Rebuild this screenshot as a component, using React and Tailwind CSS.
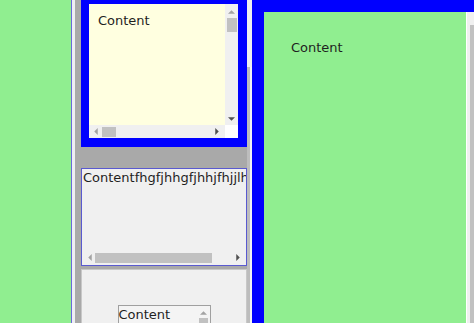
import React from 'react';

const Arrow = ({ dir, dark }) => {
  const pts = {
    up: '0,4 4,0 8,4',
    down: '0,0 8,0 4,4',
    left: '4,0 4,8 0,4',
    right: '0,0 0,8 4,4',
  }[dir];
  const box = dir === 'up' || dir === 'down' ? '0 0 8 4' : '0 0 4 8';
  const size = dir === 'up' || dir === 'down' ? 'w-[7px] h-[4px]' : 'w-[4px] h-[7px]';
  return (
    <svg viewBox={box} className={size}>
      <polygon points={pts} fill={dark ? '#505050' : '#a3a3a3'} />
    </svg>
  );
};

const App = () => {
  return (
    <div className="flex h-[323px] w-[474px] overflow-hidden bg-[#90ee90] font-['DejaVu_Sans',sans-serif] text-[13px] leading-[16px] text-[#1f1f1f]">
      {/* left green space */}
      <div className="w-[71px] shrink-0" />

      {/* middle column */}
      <div className="flex w-[181px] shrink-0 border-l border-[#6a6ad8] bg-[#eeeef4]">
        <div className="ml-[3px] flex w-[172px] flex-col bg-[#a9a9a9] pl-[6px]">
          {/* top box */}
          <div className="flex h-[147px] w-[166px] shrink-0 flex-col border-l-[8px] border-r-[9px] border-t-[4px] border-b-[9px] border-[#0000ff] bg-[#ffffe0]">
            <div className="flex flex-1">
              <div className="flex-1 px-[9px] pt-[9px]">Content</div>
              <div className="flex w-[13px] flex-col items-center bg-[#f0f0f0] pt-[6px] pb-[4px]">
                <Arrow dir="up" />
                <div className="mt-[4px] h-[14px] w-[10px] bg-[#c1c1c1]" />
                <div className="flex-1" />
                <Arrow dir="down" dark />
              </div>
            </div>
            <div className="flex h-[13px]">
              <div className="flex flex-1 items-center bg-[#f0f0f0] pl-[5px] pr-[6px]">
                <Arrow dir="left" />
                <div className="ml-[4px] h-[10px] w-[14px] bg-[#c1c1c1]" />
                <div className="flex-1" />
                <Arrow dir="right" dark />
              </div>
              <div className="w-[13px] bg-white" />
            </div>
          </div>

          {/* second box */}
          <div className="mt-[21px] flex h-[98px] w-[166px] shrink-0 flex-col overflow-hidden border border-[#5a5ad0] bg-[#f0f0f0]">
            <div className="flex-1 whitespace-nowrap pl-[1px] pt-[1px]">Contentfhgfjhhgfjhhjfhjjlhgfj</div>
            <div className="mb-[2px] flex h-[11px] items-center px-[6px]">
              <Arrow dir="left" />
              <div className="ml-[3px] h-[10px] w-[117px] bg-[#c1c1c1]" />
              <div className="flex-1" />
              <Arrow dir="right" dark />
            </div>
          </div>

          {/* third box */}
          <div className="mt-[3px] flex w-[166px] flex-1 flex-col items-center border border-b-0 border-[#c8c8c8] bg-[#f0f0f0] pt-[35px]">
            <div className="flex w-[93px] flex-1 border border-b-0 border-[#a0a0a0] bg-[#f4f4f4]">
              <div className="flex-1 pt-[1px]">Content</div>
              <div className="flex w-[12px] flex-col items-center pt-[5px]">
                <Arrow dir="up" />
                <div className="mt-[3px] w-[9px] flex-1 bg-[#c1c1c1]" />
              </div>
            </div>
          </div>
        </div>

        {/* middle scroll strip */}
        <div className="flex w-[5px] flex-col">
          <div className="h-[67px] bg-[#f0f0f0]" />
          <div className="flex-1 border-r-2 border-[#f4f4f4] bg-[#bdbdbd]" />
        </div>
      </div>

      {/* right panel */}
      <div className="flex flex-1 border-l-[12px] border-t-[12px] border-[#0000ff]">
        <div className="flex-1 px-[27px] pt-[28px]">Content</div>
        <div className="flex w-[8px] border-l border-white bg-[#f0f0f0]">
          <div className="flex w-[3px] flex-col" />
          <div className="flex flex-1 flex-col">
            <div className="h-[13px]" />
            <div className="flex-1 bg-[#c1c1c1]" />
          </div>
        </div>
      </div>
    </div>
  );
};

export default App;
